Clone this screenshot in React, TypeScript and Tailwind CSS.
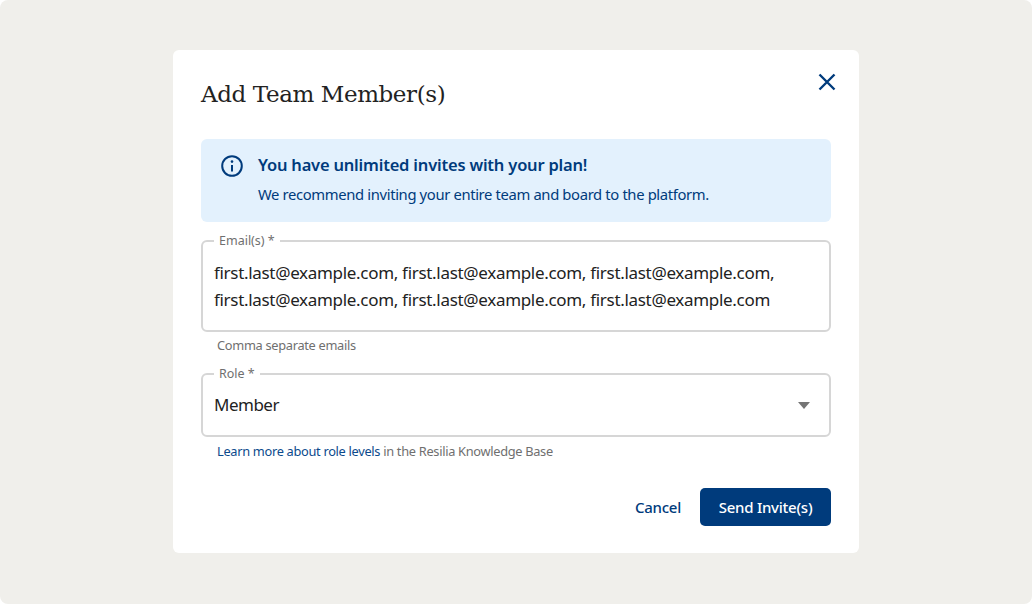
const sans = "font-['Noto_Sans','Liberation_Sans',sans-serif]";

const App = () => {
  return (
    <div className="bg-white">
      <div className={`flex h-[604px] w-[1032px] items-start justify-center rounded-[8px] bg-[#f0efeb] pt-[50px] ${sans}`}>
        <div className="relative h-[503px] w-[686px] rounded-[6px] bg-white px-[28px] pt-[26px]">
          <button className="absolute right-[23px] top-[23px] text-[#003b7c]">
            <svg width="18" height="18" viewBox="0 0 18 18" fill="none" stroke="currentColor" strokeWidth="2.4">
              <path d="M1.5 1.5l15 15M16.5 1.5l-15 15" />
            </svg>
          </button>
          <h2 className="font-['DejaVu_Serif',serif] text-[23px] leading-[36px] tracking-[-0.4px] text-[#222222]">Add Team Member(s)</h2>

          <div className="mt-[27px] flex h-[83px] gap-[15px] rounded-[6px] bg-[#e3f1fd] px-[20px] pt-[12px] text-[#003b7c]">
            <svg width="22" height="22" viewBox="0 0 22 22" fill="none" stroke="currentColor" className="mt-[4px] shrink-0">
              <circle cx="11" cy="11" r="9.8" strokeWidth="2" />
              <path d="M11 10v6.5" strokeWidth="2" />
              <circle cx="11" cy="6.6" r="1.3" fill="currentColor" stroke="none" />
            </svg>
            <div>
              <p className="text-[16.5px] font-semibold leading-[28px] tracking-[-0.2px]">You have unlimited invites with your plan!</p>
              <p className="mt-[1px] text-[14.8px] leading-[28px] tracking-[-0.36px]">We recommend inviting your entire team and board to the platform.</p>
            </div>
          </div>

          <fieldset className="mt-[10px] h-[100px] rounded-[6px] border-2 border-[#d6d6d6] pl-[11px]">
            <legend className="px-[5px] text-[12.5px] leading-[18px] text-[#6f6f6f]">Email(s) *</legend>
            <p className="mt-[9px] whitespace-nowrap text-[17px] leading-[27px] tracking-[-0.31px] text-[#222222]">
              first.last@example.com, first.last@example.com, first.last@example.com,
              <br />
              first.last@example.com, first.last@example.com, first.last@example.com
            </p>
          </fieldset>
          <p className="ml-[16px] mt-[3px] text-[12.8px] leading-[20px] tracking-[-0.3px] text-[#6f6f6f]">Comma separate emails</p>

          <fieldset className="relative mt-[10px] h-[72px] rounded-[6px] border-2 border-[#d6d6d6] pl-[11px]">
            <legend className="px-[5px] text-[12.5px] leading-[18px] text-[#6f6f6f]">Role *</legend>
            <p className="mt-[8px] text-[17px] leading-[27px] tracking-[-0.5px] text-[#222222]">Member</p>
            <span className="absolute right-[19px] top-[19px] h-0 w-0 border-x-[6px] border-t-[7px] border-x-transparent border-t-[#757575]" />
          </fieldset>
          <p className="ml-[16px] mt-[4px] text-[12.8px] leading-[20px] tracking-[-0.3px] text-[#6f6f6f]">
            <span className="text-[#0b4a8c]">Learn more about role levels</span> in the Resilia Knowledge Base
          </p>

          <div className="mt-[27px] flex items-center justify-end gap-[19px]">
            <button className="text-[15px] font-medium tracking-[-0.25px] text-[#003b7c]">Cancel</button>
            <button className="h-[38px] w-[131px] rounded-[5px] bg-[#003b7c] text-[15px] font-medium tracking-[-0.25px] text-white">Send Invite(s)</button>
          </div>
        </div>
      </div>
    </div>
  );
};

export default App;
